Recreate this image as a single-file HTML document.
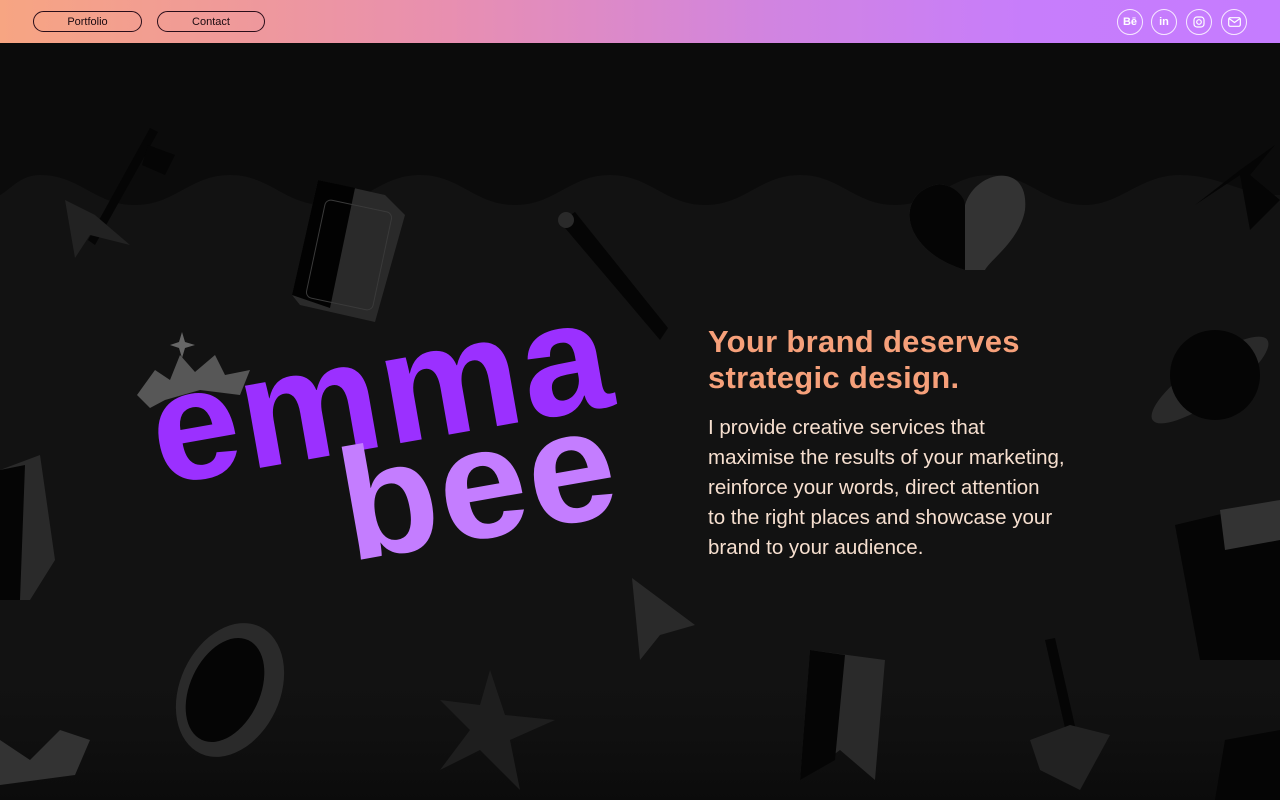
<!DOCTYPE html>
<html><head><meta charset="utf-8"><style>
*{margin:0;padding:0;box-sizing:border-box}
body{width:1280px;height:800px;overflow:hidden;background:#121212;font-family:"Liberation Sans",sans-serif;position:relative}
.top{position:absolute;left:0;top:0;width:1280px;height:43px;background:linear-gradient(90deg,#f7a582 0%,#e88fb0 35%,#d184e0 60%,#c77dfb 80%,#c57cff 100%);z-index:5}
.btn{position:absolute;top:11px;height:21px;border:1.3px solid #2a0e1a;border-radius:11px;font-size:11px;color:#1a0a10;text-align:center;line-height:20px}
.ic{position:absolute;top:9px;width:26px;height:26px;border:1.3px solid #f7e8ff;border-radius:50%;color:#fff;font-size:11px;font-weight:bold;text-align:center;line-height:24px}
.logo{position:absolute;font-weight:bold;font-size:158px;letter-spacing:2px;line-height:1;transform-origin:left bottom}
.h{position:absolute;left:708px;top:324px;color:#f6a07a;font-size:31px;font-weight:bold;line-height:36px;letter-spacing:0.3px}
.p{position:absolute;left:708px;top:413px;color:#f6dfcf;font-size:20.5px;line-height:30px;white-space:nowrap}
</style></head><body>
<svg width="1280" height="800" style="position:absolute;left:0;top:0">
<path d="M0 43H1280V195 C1240 195 1220 175 1180 175 C1140 175 1120 205 1085 205 C1045 205 1030 175 990 175 C950 175 935 205 895 205 C855 205 840 175 800 175 C760 175 745 205 705 205 C665 205 650 175 610 175 C570 175 555 205 515 205 C475 205 460 175 420 175 C380 175 365 205 325 205 C285 205 270 175 230 175 C190 175 175 205 135 205 C95 205 80 175 40 175 C20 175 10 190 0 195Z" fill="#0b0b0b"/>
<rect x="0" y="650" width="1280" height="150" fill="url(#g)"/>
<defs><linearGradient id="g" x1="0" y1="0" x2="0" y2="1"><stop offset="0" stop-color="#121212" stop-opacity="0"/><stop offset="1" stop-color="#0b0b0b"/></linearGradient></defs>
<path d="M150 128 L158 132 L95 245 L88 240Z" fill="#050505"/><path d="M148 145 L175 155 L165 175 L142 165Z" fill="#050505"/>
<path d="M65 200 L95 215 L130 245 L90 235 L75 258Z" fill="#222"/>
<path d="M318 180 L385 195 L405 215 L375 322 L300 305 L292 295Z" fill="#2a2a2a"/><path d="M318 180 L355 188 L330 308 L292 295Z" fill="#020202"/>
<rect x="315" y="205" width="68" height="100" rx="6" fill="none" stroke="#3a3a3a" transform="rotate(12 349 255)"/>
<path d="M560 222 L575 212 L668 328 L660 340Z" fill="#050505"/><circle cx="566" cy="220" r="8" fill="#2a2a2a"/>
<path d="M965 270 C900 250 895 195 935 185 C950 182 965 195 965 205 C975 170 1030 160 1025 210 C1020 240 990 260 985 270Z" fill="#333"/><path d="M965 270 C900 250 895 195 935 185 C950 182 965 195 965 205Z" fill="#050505"/>
<path d="M1240 175 L1250 230 L1280 200 L1250 175 L1275 145 L1240 170 L1195 205Z" fill="#050505"/>
<ellipse cx="1210" cy="380" rx="70" ry="20" transform="rotate(-35 1210 380)" fill="#2a2a2a"/><circle cx="1215" cy="375" r="45" fill="#050505"/>
<path d="M0 470 L40 455 L55 560 L30 600 L0 600Z" fill="#2a2a2a"/><path d="M0 470 L25 465 L20 600 L0 600Z" fill="#050505"/>
<ellipse cx="230" cy="690" rx="50" ry="70" transform="rotate(25 230 690)" fill="#2a2a2a"/><ellipse cx="225" cy="690" rx="35" ry="55" transform="rotate(25 225 690)" fill="#050505"/>
<path d="M0 740 L30 760 L60 730 L90 740 L75 775 L0 785Z" fill="#333"/>
<path d="M490 670 L505 715 L555 720 L510 740 L520 790 L480 750 L440 770 L470 730 L440 700 L480 705Z" fill="#1e1e1e"/>
<path d="M632 578 L695 625 L660 635 L640 660Z" fill="#2a2a2a"/>
<path d="M810 650 L885 660 L875 780 L840 750 L800 780Z" fill="#2a2a2a"/><path d="M810 650 L845 655 L835 760 L800 780Z" fill="#050505"/>
<path d="M1045 640 L1055 638 L1085 770 L1075 772Z" fill="#050505"/><path d="M1030 740 L1070 725 L1110 735 L1080 790 L1040 770Z" fill="#222"/>
<path d="M1175 525 L1280 500 L1280 660 L1200 660Z" fill="#050505"/><path d="M1220 510 L1280 500 L1280 540 L1225 550Z" fill="#333"/>
<path d="M1225 740 L1280 730 L1280 800 L1215 800Z" fill="#050505"/>
<path d="M137 395 L155 370 L170 380 L180 355 L195 372 L215 355 L225 375 L250 370 L240 395 L200 390 L165 400 L150 408Z" fill="#575757"/>
<path d="M182 332 L185 342 L195 345 L185 348 L182 358 L179 348 L170 345 L179 342Z" fill="#666"/>
</svg>
<div class="top">
<div class="btn" style="left:33px;width:109px">Portfolio</div>
<div class="btn" style="left:157px;width:108px">Contact</div>
<div class="ic" style="left:1117px">Bē</div>
<div class="ic" style="left:1151px">in</div>
<div class="ic" style="left:1186px"><svg width="12" height="12" viewBox="0 0 12 12" style="margin-top:6px"><rect x="1" y="1" width="10" height="10" rx="3" fill="none" stroke="#fff" stroke-width="1.2"/><circle cx="6" cy="6" r="2.3" fill="none" stroke="#fff" stroke-width="1.2"/></svg></div>
<div class="ic" style="left:1221px"><svg width="13" height="10" viewBox="0 0 13 10" style="margin-top:7px"><rect x="0.7" y="0.7" width="11.6" height="8.6" rx="1.5" fill="none" stroke="#fff" stroke-width="1.2"/><path d="M1 1.5 L6.5 5.5 L12 1.5" fill="none" stroke="#fff" stroke-width="1.2"/></svg></div>
</div>
<div class="logo" style="left:165px;top:352px;color:#9b30ff;transform:rotate(-10deg)">emma</div>
<div class="logo" style="left:355px;top:428px;color:#c47dff;transform:rotate(-10deg)">bee</div>
<div class="h">Your brand deserves<br>strategic design.</div>
<div class="p">I provide creative services that<br>maximise the results of your marketing,<br>reinforce your words, direct attention<br>to the right places and showcase your<br>brand to your audience.</div>
</body></html>
